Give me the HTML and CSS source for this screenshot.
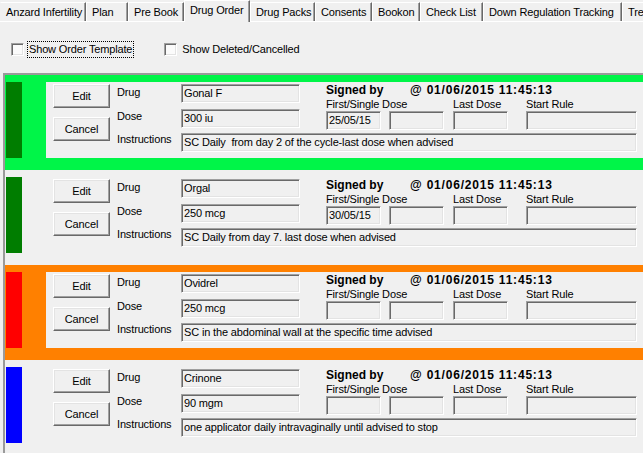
FILE: index.html
```html
<!DOCTYPE html>
<html>
<head>
<meta charset="utf-8">
<title>Drug Order</title>
<link rel="stylesheet" href="styles.css">
</head>
<body>
<div class="tabs">
  <div class="tab tab-anzard">Anzard Infertility</div>
  <div class="tab tab-plan">Plan</div>
  <div class="tab tab-prebook">Pre Book</div>
  <div class="tab tab-drugorder active">Drug Order</div>
  <div class="tab tab-packs">Drug Packs</div>
  <div class="tab tab-consents">Consents</div>
  <div class="tab tab-bookon">Bookon</div>
  <div class="tab tab-checklist">Check List</div>
  <div class="tab tab-downreg">Down Regulation Tracking</div>
  <div class="tab tab-last">Treatment</div>
</div>

<div class="options">
  <label class="opt"><span class="cb"></span><span class="opt-text focus">Show Order Template</span></label>
  <label class="opt opt-second"><span class="cb"></span><span class="opt-text">Show Deleted/Cancelled</span></label>
</div>

<div class="scroll">
  <div class="card card-green">
    <div class="marker mk-dkgreen"></div>
    <div class="panel">
      <div class="btns"><div class="btn">Edit</div><div class="btn">Cancel</div></div>
      <div class="labels"><div>Drug</div><div>Dose</div><div>Instructions</div></div>
      <div class="fields">
        <div class="top">
          <div class="dd"><div class="box box-drug">Gonal F</div><div class="box box-dose">300 iu</div></div>
          <div class="signed">
            <div class="sig"><span class="sig-by">Signed by</span><span class="sig-at">@ 01/06/2015 11:45:13</span></div>
            <div class="dl dl-first">First/Single Dose</div>
            <div class="dl dl-last">Last Dose</div>
            <div class="dl dl-rule">Start Rule</div>
            <div class="box d1">25/05/15</div>
            <div class="box d2"></div>
            <div class="box d3"></div>
            <div class="box d4"></div>
          </div>
        </div>
        <div class="box box-instr">SC Daily  from day 2 of the cycle-last dose when advised</div>
      </div>
    </div>
  </div>

  <div class="card">
    <div class="marker mk-dkgreen"></div>
    <div class="panel">
      <div class="btns"><div class="btn">Edit</div><div class="btn">Cancel</div></div>
      <div class="labels"><div>Drug</div><div>Dose</div><div>Instructions</div></div>
      <div class="fields">
        <div class="top">
          <div class="dd"><div class="box box-drug">Orgal</div><div class="box box-dose">250 mcg</div></div>
          <div class="signed">
            <div class="sig"><span class="sig-by">Signed by</span><span class="sig-at">@ 01/06/2015 11:45:13</span></div>
            <div class="dl dl-first">First/Single Dose</div>
            <div class="dl dl-last">Last Dose</div>
            <div class="dl dl-rule">Start Rule</div>
            <div class="box d1">30/05/15</div>
            <div class="box d2"></div>
            <div class="box d3"></div>
            <div class="box d4"></div>
          </div>
        </div>
        <div class="box box-instr">SC Daily from day 7. last dose when advised</div>
      </div>
    </div>
  </div>

  <div class="card card-orange">
    <div class="marker mk-red"></div>
    <div class="panel">
      <div class="btns"><div class="btn">Edit</div><div class="btn">Cancel</div></div>
      <div class="labels"><div>Drug</div><div>Dose</div><div>Instructions</div></div>
      <div class="fields">
        <div class="top">
          <div class="dd"><div class="box box-drug">Ovidrel</div><div class="box box-dose">250 mcg</div></div>
          <div class="signed">
            <div class="sig"><span class="sig-by">Signed by</span><span class="sig-at">@ 01/06/2015 11:45:13</span></div>
            <div class="dl dl-first">First/Single Dose</div>
            <div class="dl dl-last">Last Dose</div>
            <div class="dl dl-rule">Start Rule</div>
            <div class="box d1"></div>
            <div class="box d2"></div>
            <div class="box d3"></div>
            <div class="box d4"></div>
          </div>
        </div>
        <div class="box box-instr">SC in the abdominal wall at the specific time advised</div>
      </div>
    </div>
  </div>

  <div class="card">
    <div class="marker mk-blue"></div>
    <div class="panel">
      <div class="btns"><div class="btn">Edit</div><div class="btn">Cancel</div></div>
      <div class="labels"><div>Drug</div><div>Dose</div><div>Instructions</div></div>
      <div class="fields">
        <div class="top">
          <div class="dd"><div class="box box-drug">Crinone</div><div class="box box-dose">90 mgm</div></div>
          <div class="signed">
            <div class="sig"><span class="sig-by">Signed by</span><span class="sig-at">@ 01/06/2015 11:45:13</span></div>
            <div class="dl dl-first">First/Single Dose</div>
            <div class="dl dl-last">Last Dose</div>
            <div class="dl dl-rule">Start Rule</div>
            <div class="box d1"></div>
            <div class="box d2"></div>
            <div class="box d3"></div>
            <div class="box d4"></div>
          </div>
        </div>
        <div class="box box-instr">one applicator daily intravaginally until advised to stop</div>
      </div>
    </div>
  </div>
</div>
</body>
</html>
```

FILE: styles.css
```css
html, body {
  margin: 0;
  padding: 0;
}
body {
  width: 643px;
  height: 453px;
  overflow: hidden;
  background: #f0f0f0;
  color: #000;
  font-family: "Liberation Sans", Arial, sans-serif;
  font-size: 11px;
  line-height: 13px;
  letter-spacing: -0.15px;
}

/* ---------- tabs ---------- */
.tabs {
  display: flex;
  align-items: flex-start;
  height: 22px;
  box-shadow: inset 0 -1px #ffffff;
  white-space: nowrap;
  overflow: hidden;
}
.tab {
  box-sizing: border-box;
  flex: none;
  height: 19px;
  margin-top: 2px;
  padding: 3px 0 0 5px;
  border-top: 1px solid #ffffff;
  border-left: 1px solid #ffffff;
  border-right: 1px solid #696969;
  box-shadow: inset -1px 0 #a0a0a0;
  overflow: hidden;
}
.tab.active {
  height: 22px;
  margin-top: 0;
  background: #f0f0f0;
}
.tab-anzard { width: 86px; border-left-color: transparent; }
.tab-plan { width: 42px; }
.tab-prebook { width: 56px; }
.tab-drugorder { width: 66px; }
.tab-packs { width: 65px; }
.tab-consents { width: 57px; }
.tab-bookon { width: 48px; }
.tab-checklist { width: 63px; }
.tab-downreg { width: 139px; }
.tab-last { width: 80px; }

/* ---------- options ---------- */
.options {
  box-sizing: border-box;
  height: 51px;
  padding: 3px 0 0 11px;
  display: flex;
  align-items: center;
}
.opt {
  display: flex;
  align-items: center;
}
.opt-second {
  margin-left: 30px;
}
.cb {
  box-sizing: border-box;
  width: 13px;
  height: 13px;
  margin-right: 3px;
  border: 1px solid;
  border-color: #a0a0a0 #ffffff #ffffff #a0a0a0;
  box-shadow: inset 1px 1px #696969, inset -1px -1px #e3e3e3;
  background: #fbfbfb;
}
.opt-text {
  padding: 1px;
  border: 1px dotted transparent;
}
.opt-text.focus {
  border-color: #000;
}

/* ---------- scroll area ---------- */
.scroll {
  margin-left: 3px;
  border-top: 2px solid #9a9a9a;
  border-left: 2px solid #9a9a9a;
}
.card {
  height: 95px;
  display: flex;
  align-items: flex-start;
}
.card-green { background: #00f548; }
.card-orange { background: #ff8000; }

.marker {
  flex: none;
  width: 16px;
  height: 76px;
  margin: 7px 0 0 1px;
}
.mk-dkgreen { background: #007d00; }
.mk-red { background: #ff0000; }
.mk-blue { background: #0000ff; }

.panel {
  flex: 1;
  height: 76px;
  margin: 7px 0 0 24px;
  padding-left: 7px;
  background: #f0f0f0;
  display: flex;
  align-items: flex-start;
}

.btns {
  flex: none;
  width: 57px;
  margin-top: 2px;
  display: flex;
  flex-direction: column;
  gap: 9px;
}
.btn {
  box-sizing: border-box;
  height: 24px;
  border: 1px solid;
  border-color: #ffffff #696969 #696969 #ffffff;
  box-shadow: inset -1px -1px #a0a0a0, inset 1px 1px #e3e3e3;
  background: #f0f0f0;
  display: flex;
  align-items: center;
  justify-content: center;
}

.labels {
  flex: none;
  width: 64px;
  margin-left: 7px;
  padding-top: 4px;
  display: grid;
  grid-template-rows: 24px 23px 13px;
}

.fields {
  flex: none;
  display: flex;
  flex-direction: column;
}
.top {
  display: flex;
  align-items: flex-start;
}
.dd {
  margin-top: 2px;
  display: flex;
  flex-direction: column;
  gap: 6px;
}

.box {
  box-sizing: border-box;
  height: 19px;
  border: 1px solid;
  border-color: #a0a0a0 #ffffff #ffffff #a0a0a0;
  box-shadow: inset 1px 1px #696969, inset -1px -1px #e3e3e3;
  background: #f0f0f0;
  padding-left: 2px;
  line-height: 17px;
  white-space: pre;
  overflow: hidden;
}
.box-drug, .box-dose { width: 119px; }
.box-instr {
  width: 456px;
  margin-top: 3px;
}

.signed {
  margin: 2px 0 0 26px;
  display: grid;
  grid-template-columns: 55px 8px 55px 9px 55px 18px 111px;
  grid-template-rows: 13px 14px 19px;
}
.sig {
  grid-column: 1 / -1;
  grid-row: 1;
  font-size: 12px;
  font-weight: bold;
  letter-spacing: 0;
  white-space: nowrap;
}
.sig-by {
  display: inline-block;
  width: 84px;
}
.sig-at {
  letter-spacing: 0.8px;
}
.dl {
  grid-row: 2;
  white-space: nowrap;
  padding-top: 1px;
}
.dl-first { grid-column: 1 / 5; }
.dl-last { grid-column: 5; }
.dl-rule { grid-column: 7; }
.d1, .d2, .d3, .d4 { grid-row: 3; }
.d1 { grid-column: 1; }
.d2 { grid-column: 3; }
.d3 { grid-column: 5; }
.d4 { grid-column: 7; }
```
